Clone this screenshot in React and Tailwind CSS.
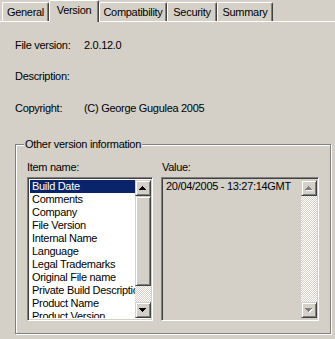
import React from "react";

const raised =
  "bg-[#d4d0c8] border border-t-[#d4d0c8] border-l-[#d4d0c8] border-r-[#404040] border-b-[#404040] shadow-[inset_1px_1px_0_#fff,inset_-1px_-1px_0_#808080]";
const sunken =
  "border border-t-[#808080] border-l-[#808080] border-r-white border-b-white shadow-[inset_1px_1px_0_#404040,inset_-1px_-1px_0_#d4d0c8]";
const checker =
  "bg-[image:repeating-conic-gradient(#ffffff_0_25%,#d4d0c8_0_50%)] bg-[length:2px_2px]";

const UP = "M3 0h1v1h1v1h1v1h1v1H0V3h1V2h1V1h1z";
const DOWN = "M0 0h7v1H6v1H5v1H4v1H3V3H2V2H1V1H0z";

const Arrow = ({ d, disabled }) => (
  <div className={`${raised} w-[16px] h-[16px] shrink-0 flex items-center justify-center`}>
    <svg width="8" height="5" viewBox="0 0 8 5" shapeRendering="crispEdges">
      {disabled && <path d={d} fill="#ffffff" transform="translate(1 1)" />}
      <path d={d} fill={disabled ? "#808080" : "#000000"} />
    </svg>
  </div>
);

const items = [
  "Build Date",
  "Comments",
  "Company",
  "File Version",
  "Internal Name",
  "Language",
  "Legal Trademarks",
  "Original File name",
  "Private Build Description",
  "Product Name",
  "Product Version",
];

const tabs = [
  { label: "General", w: "w-[47px]" },
  { label: "Version", w: "w-[50px]", active: true },
  { label: "Compatibility", w: "w-[68px]" },
  { label: "Security", w: "w-[50px]" },
  { label: "Summary", w: "w-[56px]" },
];

export default function App() {
  return (
    <div className="w-[335px] h-[339px] bg-[#d4d0c8] text-[11px] leading-[13px] tracking-[-0.3px] text-black overflow-hidden font-['Liberation_Sans',Arial,sans-serif]">
      {/* Tabs */}
      <div className="h-[22px] flex items-end pl-[2px] border-b border-white">
        {tabs.map((t) =>
          t.active ? (
            <div
              key={t.label}
              className={`${t.w} h-[22px] -mb-px relative z-10 bg-[#d4d0c8] border-t border-l border-white border-r border-r-[#404040] rounded-t-[2px] shadow-[inset_-1px_0_0_#808080] flex items-center justify-center pb-[2px]`}
            >
              {t.label}
            </div>
          ) : (
            <div
              key={t.label}
              className={`${t.w} h-[19px] border-t border-l border-white border-r border-r-[#404040] rounded-t-[2px] shadow-[inset_-1px_0_0_#808080] flex items-center justify-center pt-[1px]`}
            >
              {t.label}
            </div>
          )
        )}
      </div>

      {/* Fields */}
      <div className="pl-[15px]">
        <div className="mt-[17px] flex h-[13px]">
          <span className="w-[69px]">File version:</span>
          <span>2.0.12.0</span>
        </div>
        <div className="mt-[18px] flex h-[13px]">
          <span className="w-[69px]">Description:</span>
        </div>
        <div className="mt-[19px] flex h-[13px]">
          <span className="w-[69px]">Copyright:</span>
          <span>(C) George Gugulea 2005</span>
        </div>

        {/* Group box */}
        <div className="mt-[29px] relative w-[316px] h-[190px] border border-[#808080] shadow-[inset_1px_1px_0_#fff,1px_1px_0_#fff]">
          <span className="absolute left-[8px] -top-[7px] px-px bg-[#d4d0c8]">
            Other version information
          </span>
          <div className="pl-[11px] pt-[16px] flex gap-[8px]">
            <div className="w-[126px]">
              <div className="h-[13px]">Item name:</div>
              <div className={`${sunken} mt-[3px] h-[144px] bg-white p-[2px] pr-px flex`}>
                <div className="flex-1 overflow-hidden">
                  {items.map((it, i) => (
                    <div
                      key={it}
                      className={`h-[13px] pl-[2px] whitespace-nowrap ${
                        i === 0 ? "bg-[#0a246a] text-white" : ""
                      }`}
                    >
                      {it}
                    </div>
                  ))}
                </div>
                <div className="w-[16px] flex flex-col">
                  <Arrow d={UP} />
                  <div className={`${raised} h-[90px] shrink-0`} />
                  <div className={`${checker} flex-1`} />
                  <Arrow d={DOWN} />
                </div>
              </div>
            </div>
            <div className="w-[158px]">
              <div className="h-[13px] pl-px">Value:</div>
              <div className={`${sunken} mt-[3px] h-[144px] p-[2px] pr-px flex`}>
                <div className="flex-1 overflow-hidden pl-[2px] whitespace-nowrap">
                  20/04/2005 - 13:27:14GMT
                </div>
                <div className="w-[16px] flex flex-col">
                  <Arrow d={UP} disabled />
                  <div className={`${checker} flex-1`} />
                  <Arrow d={DOWN} disabled />
                </div>
              </div>
            </div>
          </div>
        </div>
      </div>
    </div>
  );
}
